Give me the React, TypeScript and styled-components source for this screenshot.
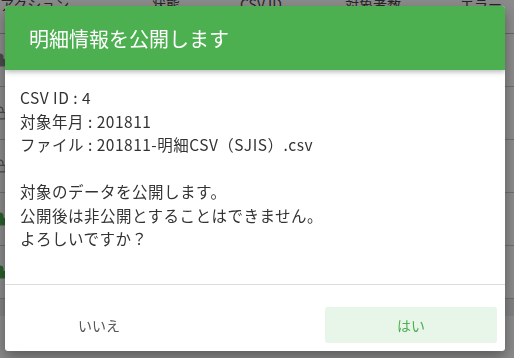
import React from "react";
import styled, { createGlobalStyle } from "styled-components";
import { Lock } from "lucide-react";

const GlobalStyle = createGlobalStyle`
  html, body {
    margin: 0;
    padding: 0;
    background: #fff;
    overflow: hidden;
  }
  body {
    font-family: "Noto Sans CJK JP", "Noto Sans", sans-serif;
    color: #333;
  }
`;

const Page = styled.div`
  width: 514px;
  height: 358px;
  overflow: hidden;
`;

const Table = styled.div`
  display: flex;
  flex-direction: column;
  margin-top: -12px;
  margin-left: -7px;
`;

const HeadRow = styled.div`
  display: grid;
  grid-template-columns: 152px 88px 105px 115px 1fr;
  height: 46px;
  border-bottom: 1px solid #bbb;
  font-size: 14px;
  color: #444;
  padding: 6px 0 0 7px;
  box-sizing: border-box;
`;

const Row = styled.div`
  display: flex;
  align-items: center;
  height: 53px;
  border-bottom: 1px solid #ccc;
  box-sizing: border-box;
`;

const LockCell = styled.div<{ $on?: boolean }>`
  width: 14px;
  color: ${(p) => (p.$on ? "#4caf50" : "#888")};
  display: flex;
`;

const Band = styled.div`
  height: 17px;
  background: #eee;
`;

const Overlay = styled.div`
  position: fixed;
  inset: 0;
  background: rgba(0, 0, 0, 0.46);
  padding: 6px 9px 0 5px;
`;

const Modal = styled.div`
  width: 500px;
  height: 345px;
  background: #fff;
  border-radius: 3px;
  display: flex;
  flex-direction: column;
  overflow: hidden;
  box-shadow: 0 6px 14px rgba(0, 0, 0, 0.35);
`;

const Header = styled.div`
  height: 64px;
  flex-shrink: 0;
  background: #4caf50;
  color: #fff;
  font-size: 20px;
  display: flex;
  align-items: center;
  padding-left: 24px;
  box-shadow: 0 2px 5px rgba(0, 0, 0, 0.28);
  position: relative;
  z-index: 1;
`;

const Body = styled.div`
  flex: 1;
  padding: 16px 15px 0;
  font-size: 15.5px;
  letter-spacing: 0.5px;
  line-height: 23.5px;
  color: #333;
  border-bottom: 1px solid #ddd;
`;

const Line = styled.div`
  min-height: 23.5px;
`;

const Footer = styled.div`
  height: 66px;
  flex-shrink: 0;
  display: flex;
  justify-content: space-between;
  align-items: flex-end;
  padding: 0 8px 8px;
  box-sizing: border-box;
`;

const Button = styled.button<{ $primary?: boolean }>`
  width: 172px;
  height: 36px;
  border: none;
  border-radius: 3px;
  font-family: "Noto Sans CJK JP", sans-serif;
  font-size: 14px;
  background: ${(p) => (p.$primary ? "#e8f5e9" : "transparent")};
  color: ${(p) => (p.$primary ? "#4caf50" : "#555")};
  cursor: pointer;
`;

const rows = [
  { on: false, fill: true },
  { on: false },
  { on: false },
  { on: true, fill: true },
  { on: true, fill: true },
];

export default function App() {
  return (
    <Page>
      <GlobalStyle />
      <Table>
        <HeadRow>
          <span>アクション</span>
          <span>状態</span>
          <span>CSV ID</span>
          <span>対象者数</span>
          <span>エラー数</span>
        </HeadRow>
        {rows.map((r, i) => (
          <Row key={i}>
            <LockCell $on={r.on}>
              <Lock size={14} fill={r.fill ? "currentColor" : "none"} />
            </LockCell>
          </Row>
        ))}
        <Band />
      </Table>
      <Overlay>
        <Modal>
          <Header>明細情報を公開します</Header>
          <Body>
            <Line>CSV ID : 4</Line>
            <Line>対象年月 : 201811</Line>
            <Line>ファイル : 201811-明細CSV（SJIS）.csv</Line>
            <Line />
            <Line>対象のデータを公開します。</Line>
            <Line>公開後は非公開とすることはできません。</Line>
            <Line>よろしいですか？</Line>
          </Body>
          <Footer>
            <Button>いいえ</Button>
            <Button $primary>はい</Button>
          </Footer>
        </Modal>
      </Overlay>
    </Page>
  );
}
